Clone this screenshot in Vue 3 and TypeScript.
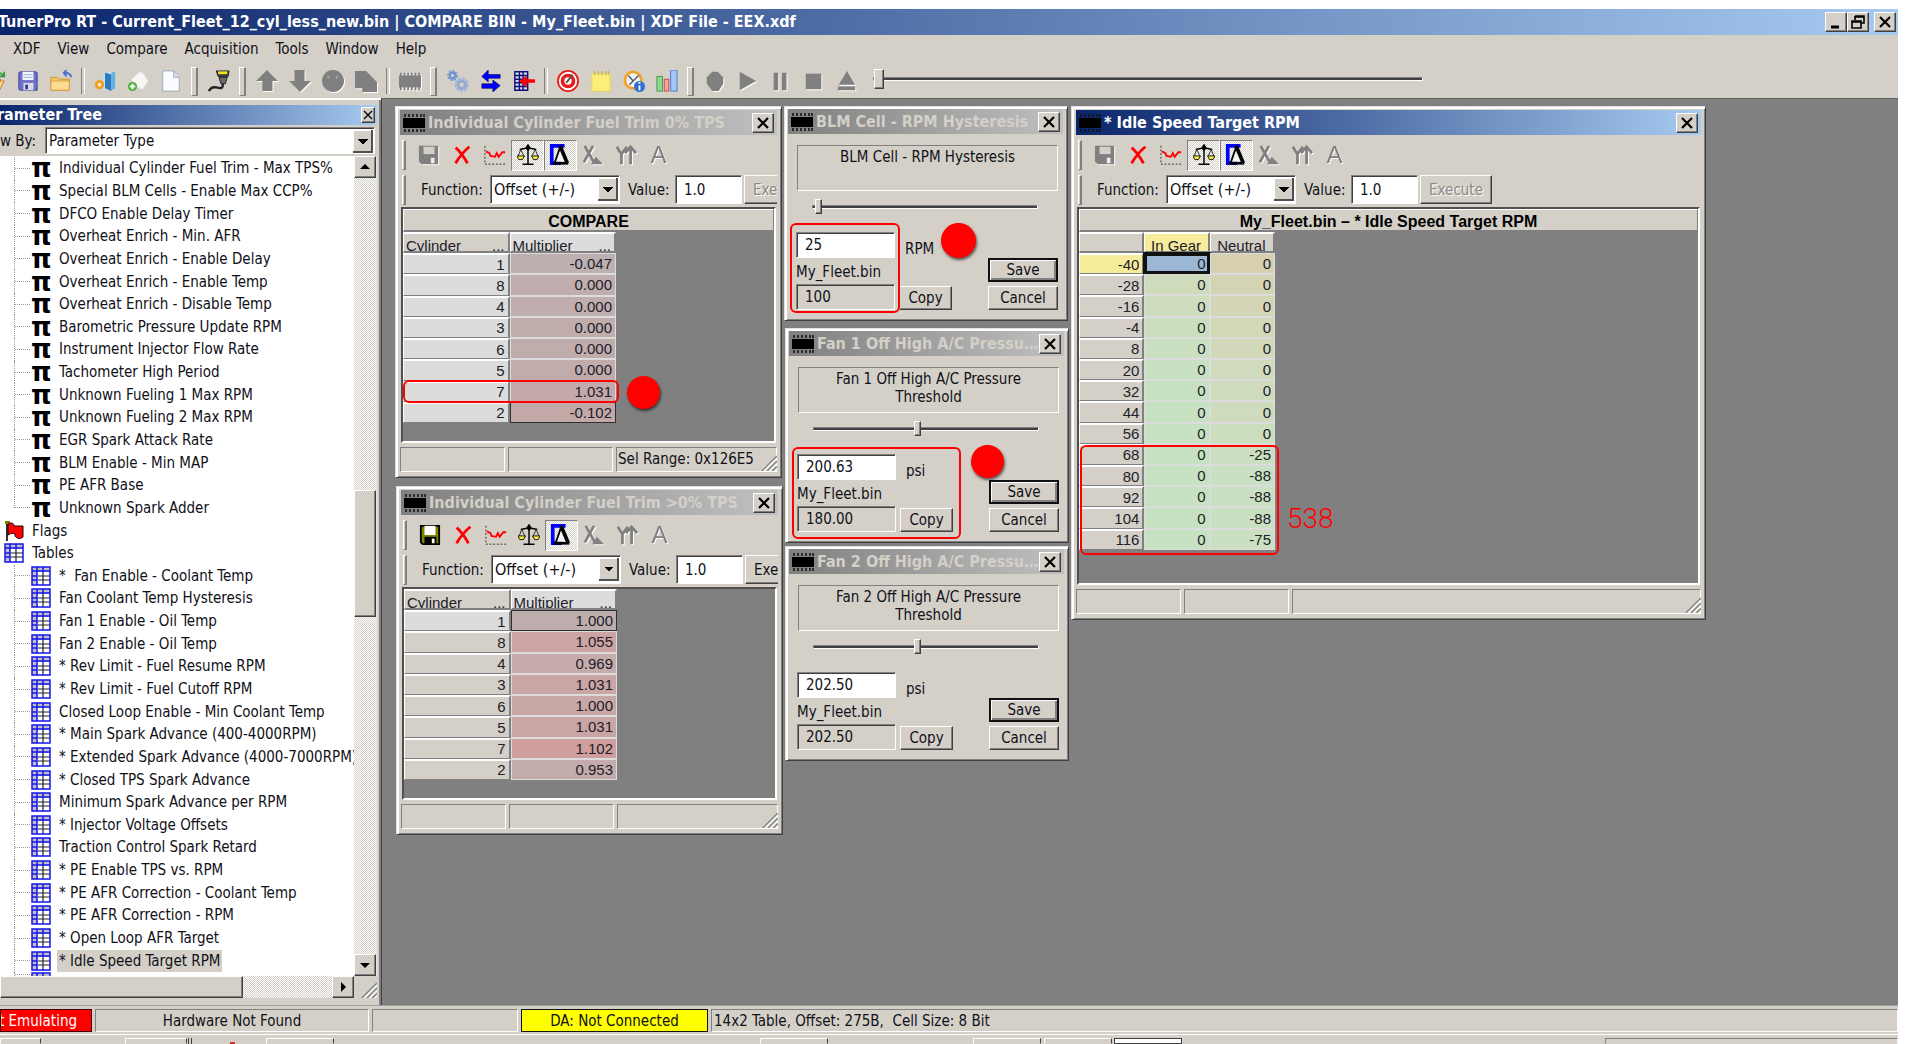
<script setup lang="ts">
type Tone = string

interface SheetRow {
  head: string
  headTone?: Tone
  cells: { text: string; tone: Tone; mark?: string }[]
}

interface Editor {
  id: string
  title: string
  active: boolean
  dirty: boolean
  compare: boolean
  caption: string
  columns: { text: string; more: boolean; tone?: Tone }[]
  rows: SheetRow[]
  status: string
  place: Record<string, string>
}

interface Dialog {
  id: string
  title: string
  text: string
  value: string
  other: string
  unit: string
  slide: number
  place: Record<string, string>
}

const box = (x: number, y: number, w: number, h: number) => ({
  left: `${x}px`,
  top: `${y}px`,
  width: `${w}px`,
  height: `${h}px`,
})

const menu = ['XDF', 'View', 'Compare', 'Acquisition', 'Tools', 'Window', 'Help']

const mainTools: { icon: string; label: string; off?: boolean }[] = [
  { icon: 'open', label: 'Open bin' },
  { icon: 'disk', label: 'Save bin' },
  { icon: 'folder', label: 'Close bin' },
  { icon: 'sep', label: '' },
  { icon: 'door', label: 'Open definition' },
  { icon: 'tag', label: 'Add definition' },
  { icon: 'page', label: 'New definition' },
  { icon: 'grip', label: '' },
  { icon: 'plug', label: 'Connect' },
  { icon: 'grip', label: '' },
  { icon: 'up', label: 'Upload', off: true },
  { icon: 'down', label: 'Download', off: true },
  { icon: 'face', label: 'Verify', off: true },
  { icon: 'copy', label: 'Copy bank', off: true },
  { icon: 'sep', label: '' },
  { icon: 'bigchip', label: 'Chip', off: true },
  { icon: 'grip', label: '' },
  { icon: 'gears', label: 'Settings' },
  { icon: 'swap', label: 'Compare bins' },
  { icon: 'import', label: 'Import table' },
  { icon: 'sep', label: '' },
  { icon: 'target', label: 'Gauges' },
  { icon: 'notes', label: 'Notes' },
  { icon: 'clock', label: 'History' },
  { icon: 'bars', label: 'Monitors' },
  { icon: 'grip', label: '' },
  { icon: 'record', label: 'Record', off: true },
  { icon: 'play', label: 'Play', off: true },
  { icon: 'pause', label: 'Pause', off: true },
  { icon: 'stop', label: 'Stop', off: true },
  { icon: 'eject', label: 'Eject', off: true },
]

const constants = [
  'Individual Cylinder Fuel Trim - Max TPS%',
  'Special BLM Cells - Enable Max CCP%',
  'DFCO Enable Delay Timer',
  'Overheat Enrich - Min. AFR',
  'Overheat Enrich - Enable Delay',
  'Overheat Enrich - Enable Temp',
  'Overheat Enrich - Disable Temp',
  'Barometric Pressure Update RPM',
  'Instrument Injector Flow Rate',
  'Tachometer High Period',
  'Unknown Fueling 1 Max RPM',
  'Unknown Fueling 2 Max RPM',
  'EGR Spark Attack Rate',
  'BLM Enable - Min MAP',
  'PE AFR Base',
  'Unknown Spark Adder',
]

const tables = [
  '*  Fan Enable - Coolant Temp',
  'Fan Coolant Temp Hysteresis',
  'Fan 1 Enable - Oil Temp',
  'Fan 2 Enable - Oil Temp',
  '* Rev Limit - Fuel Resume RPM',
  '* Rev Limit - Fuel Cutoff RPM',
  'Closed Loop Enable - Min Coolant Temp',
  '* Main Spark Advance (400-4000RPM)',
  '* Extended Spark Advance (4000-7000RPM)',
  '* Closed TPS Spark Advance',
  'Minimum Spark Advance per RPM',
  '* Injector Voltage Offsets',
  'Traction Control Spark Retard',
  '* PE Enable TPS vs. RPM',
  '* PE AFR Correction - Coolant Temp',
  '* PE AFR Correction - RPM',
  '* Open Loop AFR Target',
  '* Idle Speed Target RPM',
  '',
]

const cylinders = ['1', '8', '4', '3', '6', '5', '7', '2']
const cylinderColumns = (tone: Tone) => [
  { text: 'Cylinder', more: true },
  { text: 'Multiplier', more: true, tone },
]

const trim = (values: string[], tones: Tone[], marked: number, headTone: (i: number) => Tone | undefined): SheetRow[] =>
  values.map((text, i) => ({
    head: cylinders[i],
    headTone: headTone(i),
    cells: [{ text, tone: tones[i], mark: i === marked ? 'outlined' : undefined }],
  }))

const idleHeads = ['-40', '-28', '-16', '-4', '8', '20', '32', '44', '56', '68', '80', '92', '104', '116']
const idleNeutral = ['0', '0', '0', '0', '0', '0', '0', '0', '0', '-25', '-88', '-88', '-88', '-75']
const gearTones = ['#9bb7d5', '#cfdcbb', '#cdddbd', '#cbdfbf', '#cae0c1', '#c8e1c2', '#c7e2c3', '#c7e2c3', '#c7e2c3', '#c7e2c3', '#c7e2c3', '#c7e2c3', '#c7e2c3', '#c7e2c3']
const neutralTones = ['#d6d0b1', '#d4d3b4', '#d3d5b6', '#d2d7b8', '#d1d9ba', '#cfdbbc', '#cedcbd', '#cedcbd', '#ccdebe', '#cbdfc0', '#c9e1c2', '#c9e1c2', '#c9e1c2', '#cae0c1']

const editors: Editor[] = [
  {
    id: 'trim0',
    title: 'Individual Cylinder Fuel Trim 0% TPS',
    active: false,
    dirty: false,
    compare: true,
    caption: 'COMPARE',
    columns: cylinderColumns('#dcdcdc'),
    rows: trim(
      ['-0.047', '0.000', '0.000', '0.000', '0.000', '0.000', '1.031', '-0.102'],
      ['#bdb0b0', '#c0adad', '#c0adad', '#c1acac', '#c1acac', '#c1abab', '#c3a9a9', '#c3a8a8'],
      7,
      () => '#dcdcdc',
    ),
    status: 'Sel Range: 0x126E5',
    place: box(13, 7, 387, 372),
  },
  {
    id: 'trim1',
    title: 'Individual Cylinder Fuel Trim >0% TPS',
    active: false,
    dirty: true,
    compare: false,
    caption: '',
    columns: cylinderColumns('#dcdcdc'),
    rows: trim(
      ['1.000', '1.055', '0.969', '1.031', '1.000', '1.031', '1.102', '0.953'],
      ['#bdadad', '#cca4a4', '#c6abab', '#caa5a5', '#c8a7a7', '#caa5a5', '#d09e9e', '#c5acac'],
      0,
      (i) => (i === 0 ? '#dcdcdc' : undefined),
    ),
    status: '',
    place: box(14, 387, 387, 349),
  },
  {
    id: 'idle',
    title: '* Idle Speed Target RPM',
    active: true,
    dirty: false,
    compare: true,
    caption: 'My_Fleet.bin – * Idle Speed Target RPM',
    columns: [
      { text: '', more: false },
      { text: 'In Gear', more: false, tone: '#f7ec9c' },
      { text: 'Neutral', more: false },
    ],
    rows: idleHeads.map((head, i) => ({
      head,
      headTone: i === 0 ? '#f7ec9c' : undefined,
      cells: [
        { text: '0', tone: gearTones[i], mark: i === 0 ? 'current' : undefined },
        { text: idleNeutral[i], tone: neutralTones[i] },
      ],
    })),
    status: '',
    place: box(689, 7, 635, 514),
  },
]

const dialogs: Dialog[] = [
  {
    id: 'blm',
    title: 'BLM Cell - RPM Hysteresis',
    text: 'BLM Cell - RPM Hysteresis',
    value: '25',
    other: '100',
    unit: 'RPM',
    slide: 1,
    place: box(402, 7, 284, 215),
  },
  {
    id: 'fan1',
    title: 'Fan 1 Off High A/C Pressure Threshold',
    text: 'Fan 1 Off High A/C Pressure Threshold',
    value: '200.63',
    other: '180.00',
    unit: 'psi',
    slide: 46,
    place: box(403, 229, 284, 215),
  },
  {
    id: 'fan2',
    title: 'Fan 2 Off High A/C Pressure Threshold',
    text: 'Fan 2 Off High A/C Pressure Threshold',
    value: '202.50',
    other: '202.50',
    unit: 'psi',
    slide: 46,
    place: box(403, 447, 284, 215),
  },
]

const rings = [box(21, 281, 216, 23), box(408, 124, 110, 90), box(410, 348, 169, 92), box(698, 346, 199, 110)]
const dots = [box(245, 277, 33, 33), box(559, 124, 35, 35), box(589, 346, 33, 33)]
</script>

<template>
  <svg class="defs" aria-hidden="true">
    <defs>
      <symbol id="i-chip" viewBox="0 0 24 20">
        <path d="M3 1v18M7 1v18M11 1v18M15 1v18M19 1v18M22 1v18" stroke="#111" stroke-width="1.5" stroke-dasharray="3 12" />
        <rect x="1" y="5" width="22" height="10" fill="#000" />
      </symbol>
      <symbol id="i-open" viewBox="0 0 24 24">
        <path d="M1 8h7l2 2h8v3H6L2 21z" fill="#e8b34a" stroke="#c07a1c" />
        <path d="M6 12h16l-5 10H2z" fill="#fbd98a" stroke="#c07a1c" />
        <path d="M12 6c3-4 7-3 9 0M22 2v5h-5" fill="none" stroke="#2f9a3a" stroke-width="2" />
      </symbol>
      <symbol id="i-disk" viewBox="0 0 24 24">
        <path d="M3 2h18l1 1v19H3l-1-1V3z" fill="#6d70c4" stroke="#3f3f9a" />
        <rect x="6" y="2" width="12" height="9" fill="#f3f5ff" />
        <path d="M7 5h10M7 8h10" stroke="#8fb0e0" />
        <rect x="7" y="14" width="11" height="8" fill="#d8d8e8" />
        <rect x="9" y="16" width="3" height="5" fill="#38388a" />
      </symbol>
      <symbol id="i-folder" viewBox="0 0 24 24">
        <path d="M1 8h7l2 2h11v12H1z" fill="#f2c766" stroke="#d08f2c" />
        <path d="M1 12h20v10H1z" fill="#fbdc94" stroke="#d99a35" />
        <path d="M23 8c0-4-3-5-8-5M18 0l-3 3 3 4" fill="none" stroke="#4f6fd0" stroke-width="2" />
      </symbol>
      <symbol id="i-door" viewBox="0 0 24 24">
        <path d="M10 4l9-2v18l-9 2z" fill="#bfe3f7" />
        <path d="M12 3l7 2v18l-7-3z" fill="#2b7cc0" />
        <path d="M19 3l4-1v18l-4 2z" fill="#63b1e3" />
        <circle cx="6" cy="16" r="5" fill="#f79a1e" />
        <circle cx="6" cy="16" r="2" fill="#fff3c8" />
      </symbol>
      <symbol id="i-tag" viewBox="0 0 24 24">
        <path d="M5 10l9-8 4 2 5 8-6 9-8-3z" fill="#f6f6f6" stroke="#e2e2e2" />
        <circle cx="6" cy="18" r="5" fill="#4fae3c" />
        <path d="M6 15v6M3 18h6" stroke="#fff" stroke-width="2" />
      </symbol>
      <symbol id="i-page" viewBox="0 0 24 24">
        <path d="M3 1h12l6 7v15H3z" fill="#fbfcff" stroke="#9aa4b8" />
        <path d="M15 1v7h6" fill="#d9e0ee" stroke="#9aa4b8" />
      </symbol>
      <symbol id="i-plug" viewBox="0 0 24 24">
        <path d="M9 1h14l-1 6h-11z" fill="#444" stroke="#222" />
        <path d="M11 3h10" stroke="#f1e21b" stroke-width="3" />
        <path d="M12 8h9l-2 7h-5z" fill="#6a6a6a" stroke="#222" />
        <path d="M16 15c1 6-3 5-7 4s-6 0-8 4" fill="none" stroke="#222" stroke-width="2.6" />
      </symbol>
      <symbol id="i-up" viewBox="0 0 24 24"><path d="M12 0l12 12h-6v11H7V12H0z" fill="#808080" /></symbol>
      <symbol id="i-down" viewBox="0 0 24 24"><path d="M6 0h11v12h7L12 24 0 12h6z" fill="#808080" /></symbol>
      <symbol id="i-face" viewBox="0 0 24 24">
        <circle cx="12" cy="12" r="12" fill="#808080" />
        <path d="M6 8h2M15 8h2" stroke="#c0bdb6" stroke-width="2" />
      </symbol>
      <symbol id="i-copy" viewBox="0 0 24 24"><path d="M0 1h12l4 4 8 8v11H8v-4H0z" fill="#808080" /></symbol>
      <symbol id="i-bigchip" viewBox="0 0 24 24">
        <path d="M2 3v19M6 3v19M10 3v19M14 3v19M18 3v19M22 3v19" stroke="#808080" stroke-width="2" />
        <rect x="0" y="6" width="24" height="13" fill="#808080" />
      </symbol>
      <symbol id="i-gears" viewBox="0 0 24 24">
        <circle cx="6" cy="6" r="4" fill="none" stroke="#7c9bd6" stroke-width="4" stroke-dasharray="2 1" />
        <circle cx="6" cy="6" r="3" fill="none" stroke="#6d8fd0" stroke-width="2" />
        <circle cx="16" cy="16" r="6" fill="none" stroke="#a6b8d8" stroke-width="4" stroke-dasharray="3 1" />
        <circle cx="16" cy="16" r="4" fill="none" stroke="#93a9d0" stroke-width="3" />
      </symbol>
      <symbol id="i-swap" viewBox="0 0 24 24">
        <path d="M9 0v5h13v4H9v4L2 7z" fill="#00f" stroke="#002" stroke-width=".6" />
        <path d="M14 11v4H2v5h12v4l8-7z" fill="#00f" stroke="#002" stroke-width=".6" />
      </symbol>
      <symbol id="i-import" viewBox="0 0 24 24">
        <path d="M2 2h14v20H2zM2 6h14M2 10h14M2 14h14M2 18h14M7 2v20M11 2v20" fill="#dde" stroke="#10107a" stroke-width="1.6" />
        <path d="M15 6v4h9v4h-9v5l-8-7z" fill="#f00" />
      </symbol>
      <symbol id="i-target" viewBox="0 0 24 24">
        <circle cx="12" cy="12" r="11" fill="#fff" stroke="#e81c1c" stroke-width="2" />
        <circle cx="12" cy="12" r="6" fill="#fff" stroke="#e81c1c" stroke-width="4" />
        <path d="M10 14l7-9" stroke="#555" stroke-width="2" />
      </symbol>
      <symbol id="i-notes" viewBox="0 0 24 24">
        <rect x="2" y="4" width="20" height="19" fill="#fbee7a" stroke="#e6d24c" />
        <path d="M5 1v5M9 1v5M13 1v5M17 1v5M20 1v5" stroke="#b9a950" />
      </symbol>
      <symbol id="i-clock" viewBox="0 0 24 24">
        <circle cx="11" cy="11" r="9" fill="#eef3fa" stroke="#efa32a" stroke-width="3" />
        <path d="M6 6l5 6 6-6M11 12l-4 4" fill="none" stroke="#556" stroke-width="1.5" />
        <circle cx="18" cy="18" r="6" fill="#2f6fd0" />
        <path d="M18 17v5M18 13v2" stroke="#fff" stroke-width="2" />
      </symbol>
      <symbol id="i-bars" viewBox="0 0 24 24">
        <rect x="1" y="7" width="6" height="16" fill="#8fd98f" stroke="#3d9b44" />
        <rect x="9" y="10" width="5" height="13" fill="#f2a0a0" stroke="#cc4a4a" />
        <rect x="16" y="0" width="7" height="23" fill="#a4c6f5" stroke="#4678c8" />
      </symbol>
      <symbol id="i-record" viewBox="0 0 24 24"><path d="M9 2h6l6 6v7l-5 8H9l-6-8V8z" fill="#808080" /></symbol>
      <symbol id="i-play" viewBox="0 0 24 24"><path d="M3 2l18 10L3 22z" fill="#808080" /></symbol>
      <symbol id="i-pause" viewBox="0 0 24 24"><path d="M4 3h5v19H4zM13 3h5v19h-5z" fill="#808080" /></symbol>
      <symbol id="i-stop" viewBox="0 0 24 24"><path d="M3 4h17v17H3z" fill="#808080" /></symbol>
      <symbol id="i-eject" viewBox="0 0 24 24"><path d="M12 1l9 15H3zM2 18h19v4H2z" fill="#808080" /></symbol>

      <symbol id="i-save" viewBox="0 0 24 24">
        <path d="M2 2h20v20H4l-2-2z" fill="#808000" stroke="#000" stroke-width="2" />
        <rect x="6" y="2" width="12" height="10" fill="#fff" />
        <rect x="6" y="14" width="13" height="8" fill="#000" />
        <rect x="14" y="16" width="3" height="5" fill="#fff" />
      </symbol>
      <symbol id="i-saveoff" viewBox="0 0 24 24">
        <path d="M1 2h21v20H4l-3-3z" fill="#808080" />
        <rect x="6" y="3" width="12" height="8" fill="#d4d0c8" />
        <rect x="14" y="15" width="4" height="6" fill="#eee" />
      </symbol>
      <symbol id="i-cross" viewBox="0 0 24 24">
        <path d="M5 4c5 4 9 10 13 17M20 3C14 8 9 14 5 21" fill="none" stroke="#f00" stroke-width="3" />
      </symbol>
      <symbol id="i-graph" viewBox="0 0 24 24">
        <path d="M1 2v20h22" fill="none" stroke="#222" stroke-dasharray="2 2" />
        <path d="M2 8l4 2 1 3 5 1 2-4 2 4 4-5h3" fill="none" stroke="#f00" stroke-width="2" />
      </symbol>
      <symbol id="i-scales" viewBox="0 0 24 24">
        <path d="M12 1v21M6 22h12M3 6l9-2 9 2M12 1l2 3-2 3-2-3z" fill="none" stroke="#000" stroke-width="1.6" />
        <path d="M1 14l3-8 4 8M16 14l4-8 3 8" fill="none" stroke="#222" />
        <path d="M0 13h8l-2 4H2zM16 13h8l-2 4h-4z" fill="#f5ee30" stroke="#111" />
      </symbol>
      <symbol id="i-delta" viewBox="0 0 24 24">
        <path d="M17 2H3v19h10" fill="none" stroke="#00f" stroke-width="4" />
        <path d="M12 4l7 17H5z" fill="#fff" fill-opacity=".6" />
        <path d="M4 21h17" stroke="#000" stroke-width="3" />
        <path d="M12 4L6 21" stroke="#000" stroke-width="2" />
        <path d="M12 2l8 19" stroke="#000" stroke-width="4" />
      </symbol>
      <symbol id="i-xaxis" viewBox="0 0 24 24">
        <path d="M3 2l10 18M12 2L2 20" fill="none" stroke="#808080" stroke-width="3" />
        <path d="M10 22l5-8 3 3 5 5z" fill="#808080" />
      </symbol>
      <symbol id="i-yaxis" viewBox="0 0 24 24">
        <path d="M2 3l5 8 6-8M7 11v11M17 22V5M11 10l6-7 6 7" fill="none" stroke="#808080" stroke-width="3" />
      </symbol>
      <symbol id="i-table" viewBox="0 0 20 20">
        <rect x="1" y="1" width="18" height="18" fill="#fff" />
        <path d="M1 1h18v5H1zM1 1h5v18H1z" fill="#c0c0c0" />
        <path d="M7 10h12M7 14h12M12 6v13" stroke="#222" stroke-width="1.2" />
        <path d="M1 1h18v18H1zM1 5h18M6 1v18M12 1v5M1 10h5M1 14h5" fill="none" stroke="#1414f0" stroke-width="1.5" />
      </symbol>
      <symbol id="i-flag" viewBox="0 0 20 20">
        <path d="M3 2v18" stroke="#000" stroke-width="1.6" />
        <path d="M1 0h5v3H1z" fill="#808000" />
        <path d="M4 3c3-2 6-1 6 2h9v11c-2 2-6 2-8-1v-2c-2-1-4-1-7 1z" fill="#f00" stroke="#200" />
      </symbol>
      <symbol id="i-size" viewBox="0 0 18 18">
        <path d="M3 18L18 3M9 18l9-9M15 18l3-3" stroke="#fff" stroke-width="2" />
        <path d="M1 18L18 1M7 18L18 7M13 18l5-5" stroke="#808080" stroke-width="1.6" />
      </symbol>
    </defs>
  </svg>

  <div class="app">
    <header class="titlebar active main-title">
      <h1>TunerPro RT - Current_Fleet_12_cyl_less_new.bin | COMPARE BIN - My_Fleet.bin | XDF File - EEX.xdf</h1>
      <div class="controls">
        <button class="raised cap" aria-label="Minimize"><svg viewBox="0 0 20 18"><path d="M5 14h8" stroke="#000" stroke-width="3" /></svg></button>
        <button class="raised cap" aria-label="Restore"><svg viewBox="0 0 20 18"><path d="M7 3h9v7h-3M7 3v4M7 4h9M4 8h9v7H4zM4 9h9" fill="none" stroke="#000" stroke-width="1.6" /></svg></button>
        <button class="raised cap last" aria-label="Close"><svg viewBox="0 0 20 18"><path d="M5 4l10 10M15 4L5 14" stroke="#000" stroke-width="2.2" /></svg></button>
      </div>
    </header>

    <nav class="menu">
      <a v-for="m in menu" :key="m" href="#">{{ m }}</a>
    </nav>

    <div class="toolbar">
      <template v-for="(t, i) in mainTools" :key="i">
        <span v-if="t.icon === 'sep'" class="sep"></span>
        <span v-else-if="t.icon === 'grip'" class="grip"></span>
        <button v-else class="tool" :class="{ off: t.off }" :aria-label="t.label">
          <svg><use :href="'#i-' + t.icon" /></svg>
        </button>
      </template>
      <input class="range playback" type="range" min="0" max="100" value="0" aria-label="Playback position" />
    </div>

    <main class="body">
      <aside class="panel">
        <header class="titlebar active panel-title">
          <h2>Parameter Tree</h2>
          <button class="raised mini" aria-label="Close panel"><svg viewBox="0 0 12 14"><path d="M2 3l8 8M10 3l-8 8" stroke="#000" stroke-width="1.3" /></svg></button>
        </header>
        <div class="viewby">
          <label for="viewby">View By:</label>
          <select id="viewby" class="combo"><option>Parameter Type</option></select>
        </div>
        <div class="tree-area">
          <ul class="tree">
            <li v-for="(c, i) in constants" :key="c" :class="{ end: i === constants.length - 1 }">
              <span class="stem"></span><span class="pi">π</span><span class="name">{{ c }}</span>
            </li>
            <li class="root"><svg class="node"><use href="#i-flag" /></svg><span class="name">Flags</span></li>
            <li class="root"><svg class="node"><use href="#i-table" /></svg><span class="name">Tables</span></li>
            <li v-for="t in tables" :key="t">
              <span class="stem"></span><svg class="node"><use href="#i-table" /></svg>
              <span v-if="t" class="name" :class="{ chosen: t === '* Idle Speed Target RPM' }">{{ t }}</span>
            </li>
          </ul>
          <div class="vscroll">
            <button class="raised arrow" aria-label="Scroll up"><svg viewBox="0 0 12 12"><path d="M6 3l5 5H1z" /></svg></button>
            <span class="gap-above"></span>
            <span class="raised vthumb"></span>
            <span class="gap-below"></span>
            <button class="raised arrow" aria-label="Scroll down"><svg viewBox="0 0 12 12"><path d="M1 4h10L6 9z" /></svg></button>
          </div>
        </div>
        <div class="hscroll">
          <span class="raised hthumb"></span>
          <span class="hgap"></span>
          <button class="raised arrow" aria-label="Scroll right"><svg viewBox="0 0 12 12"><path d="M4 1v10l5-5z" /></svg></button>
          <span class="corner"><svg class="size"><use href="#i-size" /></svg></span>
        </div>
      </aside>

      <section class="desk">
        <article v-for="e in editors" :key="e.id" class="window" :style="e.place">
          <header class="titlebar" :class="{ active: e.active }">
            <svg class="chip"><use href="#i-chip" /></svg>
            <h2>{{ e.title }}</h2>
            <button class="raised cap" aria-label="Close"><svg viewBox="0 0 20 18"><path d="M5 4l10 10M15 4L5 14" stroke="#000" stroke-width="2.2" /></svg></button>
          </header>
          <div class="strip upper">
            <span class="bar-grip"></span>
            <div class="icons">
              <button class="tool" :class="{ off: !e.dirty }" aria-label="Save"><svg><use :href="e.dirty ? '#i-save' : '#i-saveoff'" /></svg></button>
              <button class="tool" aria-label="Discard"><svg><use href="#i-cross" /></svg></button>
              <button class="tool" aria-label="Graph"><svg><use href="#i-graph" /></svg></button>
              <button class="tool" :class="{ pressed: e.compare }" aria-label="Compare"><svg><use href="#i-scales" /></svg></button>
              <button class="tool pressed" aria-label="Difference"><svg><use href="#i-delta" /></svg></button>
              <button class="tool off" aria-label="X axis"><svg><use href="#i-xaxis" /></svg></button>
              <button class="tool off" aria-label="Y axis"><svg><use href="#i-yaxis" /></svg></button>
              <button class="tool off letter" aria-label="Font">A</button>
            </div>
          </div>
          <div class="strip lower">
            <span class="bar-grip"></span>
            <label class="fn" :for="e.id + '-fn'">Function:</label>
            <select :id="e.id + '-fn'" class="combo fn-combo"><option>Offset (+/-)</option></select>
            <label class="val" :for="e.id + '-val'">Value:</label>
            <input :id="e.id + '-val'" class="field val-field" type="text" value="1.0" />
            <button class="raised exec" :disabled="!e.dirty">Execute</button>
          </div>
          <div class="sheet">
            <div v-if="e.caption" class="caption">{{ e.caption }}</div>
            <table :class="e.columns.length > 2 ? 'wide' : 'narrow'">
              <thead>
                <tr>
                  <th v-for="(c, i) in e.columns" :key="i" scope="col" :style="{ background: c.tone }">
                    <div class="th" :class="{ mid: !c.more }"><span>{{ c.text }}</span><span v-if="c.more">...</span></div>
                  </th>
                </tr>
              </thead>
              <tbody>
                <tr v-for="r in e.rows" :key="r.head">
                  <th scope="row" :style="{ background: r.headTone }">{{ r.head }}</th>
                  <td v-for="(c, i) in r.cells" :key="i" :class="c.mark" :style="{ background: c.tone }">{{ c.text }}</td>
                </tr>
              </tbody>
            </table>
          </div>
          <footer class="status">
            <span class="cell short"></span>
            <span class="cell short"></span>
            <span class="cell rest">{{ e.status }}</span>
            <svg class="size"><use href="#i-size" /></svg>
          </footer>
        </article>

        <article v-for="d in dialogs" :key="d.id" class="window dialog" :style="d.place">
          <header class="titlebar">
            <svg class="chip"><use href="#i-chip" /></svg>
            <h2>{{ d.title }}</h2>
            <button class="raised cap" aria-label="Close"><svg viewBox="0 0 20 18"><path d="M5 4l10 10M15 4L5 14" stroke="#000" stroke-width="2.2" /></svg></button>
          </header>
          <p class="about">{{ d.text }}</p>
          <input class="range small" type="range" min="0" max="100" :value="d.slide" :aria-label="d.title" />
          <div class="form">
            <input :id="d.id + '-now'" class="field" type="text" :value="d.value" />
            <label class="unit" :for="d.id + '-now'">{{ d.unit }}</label>
            <label class="file" :for="d.id + '-other'">My_Fleet.bin</label>
            <button class="raised push save">Save</button>
            <input :id="d.id + '-other'" class="field locked" type="text" :value="d.other" readonly />
            <button class="raised push copy">Copy</button>
            <button class="raised push cancel">Cancel</button>
          </div>
        </article>

        <span v-for="(r, i) in rings" :key="'r' + i" class="ring" :style="r"></span>
        <span v-for="(d, i) in dots" :key="'d' + i" class="dot" :style="d"></span>
        <span class="note">538</span>
      </section>
    </main>

    <footer class="mainstatus">
      <span class="cell emu">Not Emulating</span>
      <span class="cell hw">Hardware Not Found</span>
      <span class="cell blank"></span>
      <span class="cell da">DA: Not Connected</span>
      <span class="cell info">14x2 Table, Offset: 275B,&nbsp; Cell Size: 8 Bit</span>
    </footer>
    <div class="taskbar">
      <span class="task t1"></span>
      <span class="task t2"></span>
      <span class="divider"></span>
      <span class="spot"></span>
      <span class="task t3"></span>
      <span class="task t4"></span>
      <span class="task t5"></span>
      <span class="task t6"></span>
      <span class="task t7"></span>
      <span class="tray"></span>
    </div>
  </div>
</template>

<style>
html,
body {
  background: #fff;
}
</style>

<style scoped>
.defs {
  position: absolute;
  width: 0;
  height: 0;
}

.app {
  box-sizing: border-box;
  height: 100vh;
  padding: 9px 22px 0 0;
  display: flex;
  flex-direction: column;
  overflow: hidden;
  color: #101018;
  font: 15px/18px "DejaVu Sans Condensed", "Noto Sans", sans-serif;
}

.app * {
  box-sizing: border-box;
}

button,
input,
select {
  margin: 0;
  padding: 0;
  font: inherit;
  color: inherit;
  border: 0;
  border-radius: 0;
  outline: 0;
  background: none;
}

h1,
h2,
p,
ul {
  margin: 0;
  padding: 0;
  list-style: none;
}

h1,
h2 {
  font-size: 16px;
  line-height: 24px;
  font-weight: bold;
  white-space: nowrap;
}

.raised {
  background: #d4d0c8;
  border: 1px solid;
  border-color: #fff #404040 #404040 #fff;
  box-shadow: inset -1px -1px 0 #808080;
}

.titlebar {
  display: flex;
  align-items: center;
  flex: none;
  height: 25px;
  color: #d4d0c8;
  background: linear-gradient(90deg, #808080, #c0c0c0);
}

.titlebar.active {
  color: #fff;
  background: linear-gradient(90deg, #0a246a, #a6caf0);
}

.titlebar h2 {
  flex: 1;
  min-width: 0;
  overflow: hidden;
  text-overflow: ellipsis;
}

.main-title {
  height: 26px;
  justify-content: space-between;
}

.main-title h1 {
  margin-left: -2px;
}

.controls {
  display: flex;
  padding-right: 2px;
}

.cap {
  width: 22px;
  height: 20px;
  flex: none;
}

.cap svg {
  display: block;
  width: 20px;
  height: 18px;
}

.cap.last {
  margin-left: 5px;
}

.menu {
  flex: none;
  display: flex;
  align-items: center;
  gap: 17px;
  height: 29px;
  padding: 0 0 1px 13px;
  background: #d4d0c8;
}

.menu a {
  color: inherit;
  text-decoration: none;
}

.toolbar {
  flex: none;
  display: flex;
  align-items: center;
  height: 34px;
  overflow: hidden;
  background: #d4d0c8;
}

.toolbar > .tool:first-child {
  margin-left: -22px;
}

.tool {
  display: flex;
  align-items: center;
  justify-content: center;
  width: 33px;
  height: 31px;
  flex: none;
}

.tool svg {
  width: 22px;
  height: 22px;
}

.off {
  filter: drop-shadow(1px 1px 0 #fff);
}

.sep,
.grip {
  flex: none;
  display: flex;
  justify-content: center;
  width: 11px;
  height: 26px;
}

.sep::before {
  content: "";
  width: 2px;
  border-left: 1px solid #808080;
  border-right: 1px solid #fff;
}

.grip {
  width: 15px;
  height: 29px;
}

.grip::before {
  content: "";
  width: 4px;
  border: solid;
  border-width: 1px 2px 1px 1px;
  border-color: #fff #808080 #808080 #fff;
}

.range {
  appearance: none;
  display: block;
  height: 20px;
}

.range::-webkit-slider-runnable-track {
  height: 4px;
  border: 1px solid;
  border-color: #808080 #fff #fff #808080;
  background: #404040;
}

.range::-webkit-slider-thumb {
  appearance: none;
  width: 7px;
  height: 15px;
  margin-top: -7px;
  border: 1px solid;
  border-color: #fff #404040 #404040 #fff;
  background: #d4d0c8;
  box-shadow: inset -1px -1px 0 #808080;
}

.playback {
  width: 29%;
  margin: 0 0 4px 10px;
}

.playback::-webkit-slider-thumb {
  width: 10px;
  height: 20px;
  margin-top: -9px;
}

.body {
  flex: 1;
  min-height: 0;
  display: flex;
}

.panel {
  flex: none;
  display: flex;
  flex-direction: column;
  width: 382px;
  padding: 7px 4px 7px 0;
  background: #d4d0c8;
  border-right: 1px solid #404040;
  box-shadow: inset 0 2px 0 #fff, inset -2px 0 0 #808080;
}

.panel-title {
  height: 20px;
  padding-right: 2px;
}

.panel-title h2 {
  flex: none;
  display: flex;
  justify-content: flex-end;
  width: 102px;
  margin-right: auto;
  line-height: 20px;
}

.mini {
  width: 14px;
  height: 16px;
}

.mini svg {
  display: block;
  width: 12px;
  height: 14px;
}

.viewby {
  flex: none;
  display: flex;
  align-items: center;
  height: 31px;
}

.viewby label {
  display: flex;
  justify-content: flex-end;
  width: 36px;
  margin-right: 9px;
  overflow: hidden;
  white-space: nowrap;
}

.combo {
  appearance: none;
  height: 27px;
  padding-left: 3px;
  border: 1px solid;
  border-color: #808080 #fff #fff #808080;
  box-shadow: inset 1px 1px 0 #404040;
  background:
    conic-gradient(from -45deg at 50% 100%, #000 90deg, transparent 0) right 6px top 11px / 10px 5px no-repeat,
    linear-gradient(#d4d0c8, #d4d0c8) right 3px top 3px / 17px 20px no-repeat,
    linear-gradient(#fff, #fff) right 3px top 2px / 18px 21px no-repeat,
    linear-gradient(#505050, #505050) right 1px top 2px / 20px 23px no-repeat,
    #fff;
}

.viewby .combo {
  flex: 1;
  margin-right: 2px;
}

.tree-area {
  flex: 1;
  min-height: 0;
  display: flex;
  background: #fff;
}

.tree {
  flex: 1;
  min-width: 0;
  display: grid;
  grid-template-rows: repeat(36, minmax(0, 1fr)) 4px;
  padding-top: 1px;
  overflow: hidden;
}

.tree li {
  display: flex;
  align-items: center;
  min-height: 0;
  padding-left: 14px;
  overflow: hidden;
  white-space: pre;
}

.tree .root {
  padding-left: 4px;
}

.stem {
  align-self: stretch;
  display: flex;
  align-items: center;
  flex: none;
  width: 17px;
  border-left: 1px dotted #999;
}

.stem::after {
  content: "";
  flex: 1;
  margin-right: 1px;
  border-top: 1px dotted #999;
}

.end .stem {
  align-self: flex-start;
  height: 50%;
  align-items: flex-end;
}

.node {
  flex: none;
  width: 20px;
  height: 20px;
}

.tree li:last-child {
  align-items: flex-start;
}

.pi {
  width: 20px;
  flex: none;
  color: #000;
  font: bold 26px/22px "DejaVu Sans", sans-serif;
  text-align: center;
}

.name {
  margin-left: 6px;
  padding: 0 2px;
  line-height: 22px;
}

.chosen {
  background: #d4d0c8;
}

.vscroll,
.hgap {
  background: repeating-conic-gradient(#fff 0 25%, #d4d0c8 0 50%) 0 0 / 2px 2px;
}

.vscroll {
  flex: none;
  display: flex;
  flex-direction: column;
  width: 23px;
}

.arrow {
  flex: none;
  display: flex;
  align-items: center;
  justify-content: center;
  width: 22px;
  height: 22px;
}

.arrow svg {
  width: 12px;
  height: 12px;
}

.gap-above {
  flex: 312;
}

.vthumb {
  flex: 126;
  width: 22px;
}

.gap-below {
  flex: 337;
}

.hscroll {
  flex: none;
  display: flex;
  height: 22px;
}

.hthumb {
  width: 243px;
}

.hgap {
  flex: 1;
}

.corner {
  display: flex;
  align-items: flex-end;
  justify-content: flex-end;
  width: 23px;
}

.size {
  width: 16px;
  height: 16px;
  flex: none;
}

.desk {
  position: relative;
  flex: 1;
  min-width: 0;
  overflow: hidden;
  background: #808080;
  border-top: 1px solid #606060;
}

.window {
  position: absolute;
  display: flex;
  flex-direction: column;
  padding: 3px 4px 5px 4px;
  background: #d4d0c8;
  border: 1px solid;
  border-color: #e4e1dc #404040 #404040 #e4e1dc;
  box-shadow: inset 2px 2px 0 #fff, inset -1px -1px 0 #808080;
}

.dialog {
  padding: 2px 4px 4px 3px;
}

.window .titlebar {
  padding: 0 3px 0 2px;
}

.chip {
  flex: none;
  width: 24px;
  height: 20px;
  margin-right: 2px;
}

.strip {
  flex: none;
  display: flex;
  align-items: center;
  height: 36px;
  overflow: hidden;
  white-space: nowrap;
}

.upper {
  height: 37px;
  padding-top: 3px;
}

.lower {
  height: 35px;
}

.bar-grip {
  flex: none;
  width: 4px;
  height: 30px;
  margin-left: 2px;
  border: solid;
  border-width: 1px 2px 1px 1px;
  border-color: #fff #808080 #808080 #fff;
}

.icons {
  display: grid;
  grid-template-columns: repeat(8, 1fr);
  width: 262px;
  margin-left: 7px;
}

.icons .tool {
  width: auto;
}

.pressed {
  border: 1px solid;
  border-color: #808080 #fff #fff #808080;
  background: repeating-conic-gradient(#fff 0 25%, #d4d0c8 0 50%) 0 0 / 2px 2px;
}

.letter {
  color: #808080;
  font: 24px/28px "Liberation Sans", sans-serif;
}

.fn {
  flex: none;
  width: 69px;
  margin-left: 15px;
}

.fn-combo {
  flex: none;
  width: 130px;
  height: 29px;
  font-size: 16px;
}

.val {
  flex: none;
  width: 47px;
  margin-left: 8px;
}

.field {
  min-width: 0;
  padding-left: 8px;
  background: #fff;
  border: 1px solid;
  border-color: #808080 #fff #fff #808080;
  box-shadow: inset 1px 1px 0 #404040;
}

.val-field {
  flex: none;
  width: 67px;
  height: 29px;
}

.exec {
  flex: none;
  width: 72px;
  height: 29px;
  margin-left: 2px;
}

.exec:disabled {
  color: #8c8982;
  text-shadow: 1px 1px 0 #fff;
}

.sheet {
  flex: 1;
  min-height: 0;
  overflow: hidden;
  margin: 0 1px;
  border: 2px solid;
  border-color: #505050 #fff #fff #505050;
  background: #808080;
  color: #202028;
  font: 15px/17px "Liberation Sans", Arial, sans-serif;
}

.caption {
  height: 23px;
  padding-top: 3px;
  overflow: hidden;
  border: 1px solid;
  border-color: #fff #808080 #808080 #fff;
  border-bottom-width: 2px;
  background: #d4d0c8;
  color: #000;
  font-size: 16px;
  font-weight: bold;
  text-align: center;
}

table {
  table-layout: fixed;
  border-spacing: 0;
  background: #dcdcdc;
}

.narrow {
  width: 213px;
  height: 191px;
}

.wide {
  width: 196px;
  height: 318px;
}

th {
  padding: 0 3px 0 4px;
  font-weight: normal;
  text-align: right;
  background: #d4d0c8;
  border: 1px solid;
  border-color: #fff #808080 #808080 #fff;
  border-top-width: 2px;
  border-right-width: 2px;
}

thead th {
  border-bottom: 2px solid #808080;
  padding: 0 3px 0 2px;
}

.th {
  display: flex;
  justify-content: space-between;
  height: 17px;
  padding-top: 3px;
  overflow: hidden;
}

.th.mid {
  justify-content: center;
}

td {
  padding: 0 3px 0 0;
  text-align: right;
  border: 1px solid #dcdcdc;
}

td.outlined {
  border-color: #303030;
}

td.current {
  border-color: #111;
  box-shadow: inset 0 0 0 2px #111, 0 0 0 1px #111;
}

.status {
  position: relative;
  flex: none;
  display: flex;
  gap: 3px;
  height: 25px;
  margin-top: 4px;
}

.cell {
  border: 1px solid;
  border-color: #808080 #fff #fff #808080;
  white-space: nowrap;
  overflow: hidden;
}

.short {
  flex: none;
  width: 105px;
}

.rest {
  flex: 1;
  padding: 2px 0 0 1px;
}

.status .size {
  position: absolute;
  right: 0;
  bottom: 1px;
}

.about {
  flex: none;
  height: 46px;
  margin: 11px 5px 0 9px;
  padding: 2px 20px 0;
  text-align: center;
  border: 1px solid;
  border-color: #808080 #fff #fff #808080;
}

.small {
  flex: none;
  width: 226px;
  margin: 6px 0 0 24px;
}

.form {
  display: grid;
  grid-template-columns: 99px 53px 1fr 70px;
  grid-template-rows: repeat(3, 26px);
  column-gap: 4px;
  margin: 15px 5px 0 8px;
}

.form .field {
  grid-column: 1;
  width: 99px;
}

.form .locked {
  background: #d4d0c8;
  grid-row: 3;
}

.unit {
  grid-column: 2;
  padding: 8px 0 0 6px;
}

.file {
  grid-area: 2 / 1;
  line-height: 28px;
}

.push {
  height: 24px;
  align-self: end;
}

.save {
  grid-area: 2 / 4;
  align-self: start;
  border: 2px solid #101010;
  box-shadow: inset 1px 1px 0 #fff, inset -2px -2px 0 #808080;
  line-height: 18px;
}

.copy {
  grid-area: 3 / 2;
}

.cancel {
  grid-area: 3 / 4;
}

.ring {
  position: absolute;
  border: 2px solid #f00;
  border-radius: 6px;
}

.dot {
  position: absolute;
  border-radius: 50%;
  background: #f00;
  box-shadow: 1px 2px 3px rgba(0, 0, 0, 0.6);
}

.note {
  position: absolute;
  left: 905px;
  top: 402px;
  color: #f00;
  font: 300 28px/36px Roboto, sans-serif;
}

.mainstatus {
  flex: none;
  display: flex;
  align-items: stretch;
  gap: 3px;
  height: 29px;
  padding: 3px 0 2px;
  background: #d4d0c8;
  border-top: 1px solid #a0a0a0;
  line-height: 22px;
}

.emu {
  display: flex;
  justify-content: flex-end;
  width: 92px;
  padding-right: 14px;
  background: #f00;
  color: #fff;
  border-color: #400;
}

.hw {
  width: 274px;
  text-align: center;
}

.blank {
  width: 146px;
}

.da {
  width: 187px;
  text-align: center;
  background: #ff0;
  border-color: #111;
}

.info {
  flex: 1;
  padding-left: 2px;
}

.taskbar {
  flex: none;
  display: flex;
  height: 10px;
  padding-top: 3px;
  overflow: hidden;
  background: #d4d0c8;
  border-top: 1px solid #fff;
}

.task {
  flex: none;
  width: 68px;
  border: 1px solid;
  border-color: #fff #404040 transparent #fff;
}

.t1 {
  width: 41px;
}

.t2 {
  width: 62px;
  margin-left: 84px;
}

.divider {
  width: 4px;
  margin-left: 1px;
  border: solid #404040;
  border-width: 0 1px;
}

.spot {
  width: 5px;
  height: 3px;
  margin: 4px 0 0 38px;
  background: #d83030;
}

.t3 {
  margin-left: 31px;
}

.t4 {
  margin-left: 426px;
}

.t5 {
  margin-left: 145px;
}

.t6 {
  margin-left: 3px;
}

.t7 {
  margin-left: 2px;
  background: #fff;
  border-color: #404040;
}

.tray {
  width: 293px;
  margin-left: auto;
  border: 1px solid;
  border-color: #808080 #fff transparent #808080;
}
</style>
